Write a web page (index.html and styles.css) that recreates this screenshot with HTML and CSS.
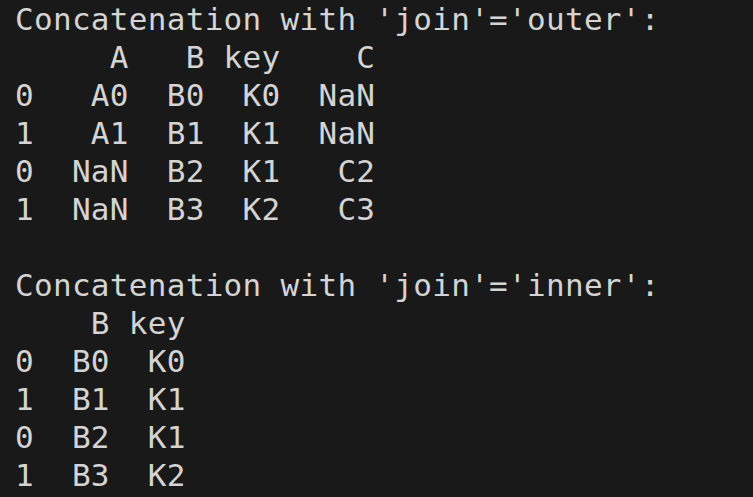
FILE: index.html
```html
<!DOCTYPE html>
<html lang="en">
<head>
<meta charset="utf-8">
<title>Terminal output</title>
<link rel="stylesheet" href="styles.css">
</head>
<body>
<main class="terminal">
<pre class="output">Concatenation with 'join'='outer':
     A   B key    C
0   A0  B0  K0  NaN
1   A1  B1  K1  NaN
0  NaN  B2  K1   C2
1  NaN  B3  K2   C3

Concatenation with 'join'='inner':
    B key
0  B0  K0
1  B1  K1
0  B2  K1
1  B3  K2</pre>
</main>
</body>
</html>
```
FILE: styles.css
```css
html, body {
  margin: 0;
  padding: 0;
  background: #191919;
}
.terminal {
  width: 753px;
  height: 497px;
  box-sizing: border-box;
  padding: 0 0 0 15px;
  overflow: hidden;
  background: #191919;
}
.output {
  margin: 0;
  font-family: "DejaVu Sans Mono", monospace;
  font-size: 31px;
  letter-spacing: 0.3px;
  line-height: 38px;
  color: #d4d4d4;
}
```
